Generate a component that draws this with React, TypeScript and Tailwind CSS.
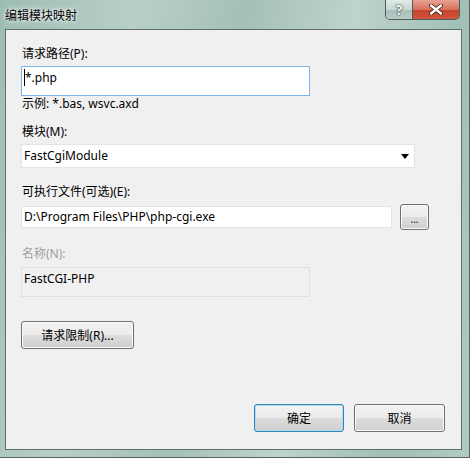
const font = "font-['Segoe_UI','Noto_Sans','Noto_Sans_CJK_SC',sans-serif]";

function WinButton({
  label,
  width,
  isDefault = false,
}: {
  label: string;
  width: string;
  isDefault?: boolean;
}) {
  return (
    <button
      type="button"
      className={`${width} h-[28px] rounded-[3px] border pt-[1px] text-[12px] text-black ${
        isDefault
          ? "border-[#3c7fb1] shadow-[inset_0_0_0_1px_#a9dcf5]"
          : "border-[#707070] shadow-[inset_0_0_0_1px_#fbfbfb]"
      } bg-[linear-gradient(to_bottom,#f2f2f2_0%,#ebebeb_50%,#dddddd_51%,#cfcfcf_100%)]`}
    >
      {label}
    </button>
  );
}

export default function App() {
  return (
    <div
      className={`${font} flex h-[458px] w-[470px] flex-col overflow-hidden border-r border-b border-[#55625f] bg-[linear-gradient(100deg,#9dbdb4_0%,#b8cfc9_25%,#a4c0b8_45%,#bed3cd_65%,#a1bfb6_85%,#b1cbc4_100%)] text-[12px] text-black`}
    >
      {/* title bar */}
      <div className="flex h-[29px] shrink-0 items-start">
        <div className="pl-[5px] pt-[7px] text-[12px] leading-[17px] text-black [text-shadow:0_0_6px_#ffffff,0_0_3px_#ffffff]">
          编辑模块映射
        </div>
        <div className="ml-auto mr-[9px] flex h-[20px] overflow-hidden rounded-b-[5px] border border-t-0 border-[#4f5a5a]">
          <div className="flex w-[27px] items-center justify-center border-r border-[#4f5a5a] bg-[linear-gradient(to_bottom,#e1ebe8_0%,#c7d7d3_50%,#a9bdb8_51%,#b9ccc7_100%)] text-[14px] font-bold text-[#f5f5f5] [text-shadow:0_0_1px_#333,0_0_2px_#333]">
            ?
          </div>
          <div className="flex w-[46px] items-center justify-center bg-[linear-gradient(to_bottom,#e8a394_0%,#d7705b_50%,#c5432a_51%,#d0573b_100%)]">
            <svg width="14" height="11" viewBox="0 0 14 11">
              <path
                d="M2 1.5 L12 9.5 M12 1.5 L2 9.5"
                stroke="#3a1a14"
                strokeWidth="4"
                strokeLinecap="round"
              />
              <path
                d="M2 1.5 L12 9.5 M12 1.5 L2 9.5"
                stroke="#ffffff"
                strokeWidth="2.4"
                strokeLinecap="round"
              />
            </svg>
          </div>
        </div>
      </div>

      {/* client area */}
      <div className="mb-[7px] ml-[5px] mr-[7px] flex flex-1 flex-col border border-[#5f6e6c] bg-[#f0f0f0] pl-[15px] pr-[16px] pt-[16px] pb-[17px]">
        <div className="pl-[1px] leading-[16px]">请求路径(P):</div>
        <div className="mt-[4px] h-[30px] w-[289px] border border-[#7eb4ea] bg-white px-[2px] pt-[3px] leading-[16px]">
          <span className="border-l border-black">*.php</span>
        </div>
        <div className="pl-[1px] leading-[16px]">示例: *.bas, wsvc.axd</div>

        <div className="mt-[12px] pl-[1px] leading-[16px]">模块(M):</div>
        <div className="mt-[4px] flex h-[24px] w-[394px] items-center justify-between border border-[#e3e5ea] bg-white pl-[2px] pr-[5px]">
          <span>FastCgiModule</span>
          <svg width="8" height="5" viewBox="0 0 8 5">
            <path d="M0 0 H8 L4 5 Z" fill="#000" />
          </svg>
        </div>

        <div className="mt-[16px] pl-[1px] leading-[16px]">可执行文件(可选)(E):</div>
        <div className="mt-[4px] flex items-center gap-[8px]">
          <div className="flex h-[22px] w-[371px] items-center border border-[#dfe2e8] bg-white px-[2px]">
            D:\Program Files\PHP\php-cgi.exe
          </div>
          <button
            type="button"
            className="h-[26px] w-[29px] rounded-[3px] border border-[#707070] bg-[linear-gradient(to_bottom,#f2f2f2_0%,#ebebeb_50%,#dddddd_51%,#cfcfcf_100%)] pt-[4px] text-[10px] leading-[10px] shadow-[inset_0_0_0_1px_#fbfbfb]"
          >
            ...
          </button>
        </div>

        <div className="mt-[16px] pl-[1px] leading-[16px] text-[#a0a0a0]">名称(N):</div>
        <div className="mt-[5px] h-[30px] w-[289px] border border-[#dbdfe6] bg-[#f0f0f0] px-[2px] pt-[3px] leading-[16px]">
          FastCGI-PHP
        </div>

        <div className="mt-[24px]">
          <WinButton label="请求限制(R)..." width="w-[113px]" />
        </div>

        <div className="mt-auto flex justify-end gap-[10px]">
          <WinButton label="确定" width="w-[90px]" isDefault />
          <WinButton label="取消" width="w-[91px]" />
        </div>
      </div>
    </div>
  );
}
